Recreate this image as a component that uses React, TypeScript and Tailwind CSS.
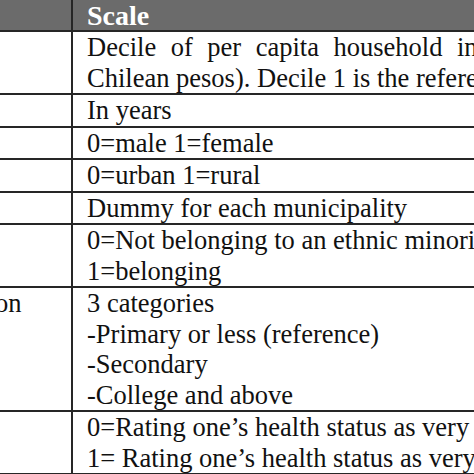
import React from "react";

type Row = { label?: string; lines: string[]; justifyFirst?: boolean };

const rows: Row[] = [
  {
    label: "Income",
    lines: ["Decile of per capita household income (in", "Chilean pesos). Decile 1 is the reference"],
    justifyFirst: true,
  },
  { label: "Age", lines: ["In years"] },
  { label: "Sex", lines: ["0=male 1=female"] },
  { label: "Area", lines: ["0=urban 1=rural"] },
  { label: "Municipality", lines: ["Dummy for each municipality"] },
  { label: "Ethnicity", lines: ["0=Not belonging to an ethnic minority", "1=belonging"] },
  {
    label: "Education",
    lines: ["3 categories", "-Primary or less (reference)", "-Secondary", "-College and above"],
  },
  {
    label: "Health",
    lines: ["0=Rating one\u2019s health status as very good or good", "1= Rating one\u2019s health status as very bad or bad"],
  },
];

export default function App() {
  return (
    <div
      className="w-[474px] h-[474px] overflow-hidden bg-white text-[#111111]"
      style={{ fontFamily: '"Liberation Serif", "DejaVu Serif", serif' }}
    >
      <div className="-ml-[100px] w-[700px] text-[26.5px] leading-[30.5px]">
        {/* Header */}
        <div className="flex bg-[#6b6b6b] border-b-2 border-[#262626]">
          <div className="w-[173px] shrink-0 border-r-2 border-[#262626] h-[30px]" />
          <div className="pl-[14px] h-[30px] font-bold text-[28px] text-white leading-[31px]">Scale</div>
        </div>

        {rows.map((row, i) => (
          <div key={i} className="flex border-b-2 border-[#262626]">
            <div className="w-[173px] shrink-0 border-r-2 border-[#262626] pl-[14px] whitespace-nowrap">
              {row.label === "Education" ? row.label : ""}
            </div>
            <div className="w-[520px] shrink-0 pl-[14px] pr-[14px]">
              {row.lines.map((line, j) =>
                row.justifyFirst && j === 0 ? (
                  <div key={j} className="text-justify [text-align-last:justify]">
                    {line}
                  </div>
                ) : (
                  <div key={j} className="whitespace-nowrap">
                    {line}
                  </div>
                )
              )}
            </div>
          </div>
        ))}
      </div>
    </div>
  );
}
